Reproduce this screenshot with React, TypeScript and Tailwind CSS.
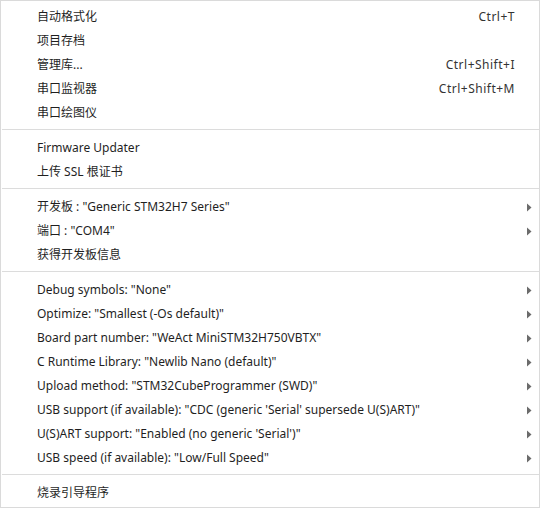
type Item =
  | { kind: "sep" }
  | { kind: "item"; label: string; shortcut?: string; submenu?: boolean };

const items: Item[] = [
  { kind: "item", label: "自动格式化", shortcut: "Ctrl+T" },
  { kind: "item", label: "项目存档" },
  { kind: "item", label: "管理库...", shortcut: "Ctrl+Shift+I" },
  { kind: "item", label: "串口监视器", shortcut: "Ctrl+Shift+M" },
  { kind: "item", label: "串口绘图仪" },
  { kind: "sep" },
  { kind: "item", label: "Firmware Updater" },
  { kind: "item", label: "上传 SSL 根证书" },
  { kind: "sep" },
  { kind: "item", label: '开发板 : "Generic STM32H7 Series"', submenu: true },
  { kind: "item", label: '端口 : "COM4"', submenu: true },
  { kind: "item", label: "获得开发板信息" },
  { kind: "sep" },
  { kind: "item", label: 'Debug symbols: "None"', submenu: true },
  { kind: "item", label: 'Optimize: "Smallest (-Os default)"', submenu: true },
  { kind: "item", label: 'Board part number: "WeAct MiniSTM32H750VBTX"', submenu: true },
  { kind: "item", label: 'C Runtime Library: "Newlib Nano (default)"', submenu: true },
  { kind: "item", label: 'Upload method: "STM32CubeProgrammer (SWD)"', submenu: true },
  {
    kind: "item",
    label: "USB support (if available): \"CDC (generic 'Serial' supersede U(S)ART)\"",
    submenu: true,
  },
  { kind: "item", label: "U(S)ART support: \"Enabled (no generic 'Serial')\"", submenu: true },
  { kind: "item", label: 'USB speed (if available): "Low/Full Speed"', submenu: true },
  { kind: "sep" },
  { kind: "item", label: "烧录引导程序" },
];

const SubmenuArrow = () => (
  <svg width="5" height="9" viewBox="0 0 5 9" className="shrink-0">
    <path d="M0 0.5 L4.5 4.5 L0 8.5 Z" fill="#6b6b6b" />
  </svg>
);

export default function App() {
  return (
    <div className="w-[540px] h-[508px] bg-white">
      <div
        className="h-full border border-[#dadada] pt-[3px] text-[12px] text-[#1f1f1f]"
        style={{ fontFamily: '"Noto Sans", "Noto Sans CJK SC", sans-serif' }}
      >
        {items.map((item, i) =>
          item.kind === "sep" ? (
            <div key={i} className="h-[11px] flex items-center pl-[1px]">
              <div className="h-px w-full bg-[#dcdcdc]" />
            </div>
          ) : (
            <div key={i} className="h-6 flex items-center pl-9 pr-[7px] pt-[2px]">
              <span className="flex-1 whitespace-nowrap leading-none">{item.label}</span>
              {item.shortcut && (
                <span className="mr-[17px] whitespace-nowrap leading-none tracking-[0.5px] text-[#333]">
                  {item.shortcut}
                </span>
              )}
              {item.submenu && <SubmenuArrow />}
            </div>
          )
        )}
      </div>
    </div>
  );
}
